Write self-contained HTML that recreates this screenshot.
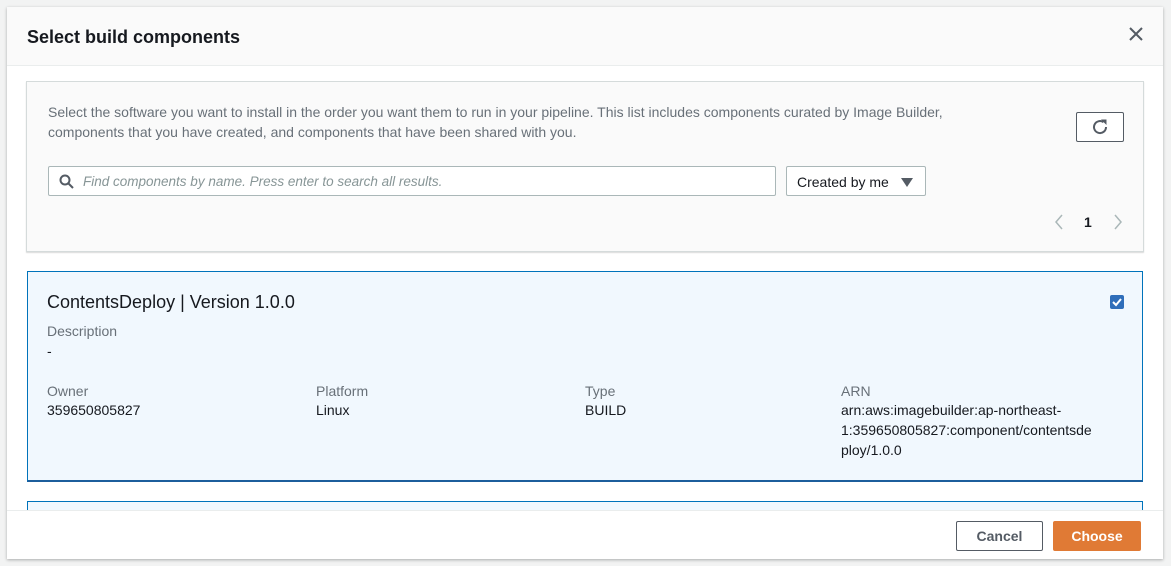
<!DOCTYPE html>
<html><head><style>
*{box-sizing:border-box;margin:0;padding:0}
body{width:1171px;height:566px;background:#f2f3f3;font-family:"Liberation Sans",sans-serif;position:relative;overflow:hidden;color:#16191f}
.modal{position:absolute;left:7px;top:7px;width:1156px;height:552px;background:#fff;box-shadow:0 1px 3px rgba(0,0,0,.3);overflow:hidden}
.hdr{position:absolute;left:0;top:0;width:100%;height:59px;background:#fafafa;border-bottom:1px solid #eaeded}
.hdr h2{position:absolute;left:20px;top:20px;font-size:18px;font-weight:bold}
.x{position:absolute;right:20px;top:20px}
.panel{position:absolute;left:19px;top:74px;width:1118px;height:171px;background:#fafafa;border:1px solid #d5dbdb;box-shadow:0 1px 1px rgba(0,0,0,.15)}
.desc{position:absolute;left:21px;top:20px;font-size:14px;line-height:20px;color:#687078;width:960px}
.refresh{position:absolute;left:1049px;top:30px;width:48px;height:30px;border:1px solid #545b64;background:#fff;border-radius:2px}
.search{position:absolute;left:21px;top:84px;width:728px;height:30px;border:1px solid #aab7b8;background:#fff;border-radius:2px}
.search span{position:absolute;left:34px;top:7px;font-size:13.5px;font-style:italic;color:#879596}
.sel{position:absolute;left:759px;top:84px;width:140px;height:30px;border:1px solid #aab7b8;background:#fff;border-radius:2px;font-size:14px;padding:7px 10px}
.sel i{position:absolute;right:12px;top:11px;width:0;height:0;border-left:6px solid transparent;border-right:6px solid transparent;border-top:9px solid #545b64}
.pg{position:absolute;font-size:14px}
.card{position:absolute;left:20px;width:1116px;background:#f1f8fe;border:1px solid #0073bb;border-bottom:2px solid #1c5e9c}
.card h3{position:absolute;left:19px;top:20px;font-size:18px;font-weight:normal}
.lbl{position:absolute;font-size:14px;color:#687078}
.val{position:absolute;font-size:14px;color:#16191f;line-height:20px}
.cb{position:absolute;right:18px;top:23px;width:14px;height:14px;background:#2f6eba;border-radius:2px}
.ftr{position:absolute;left:0;top:503px;width:100%;height:49px;background:#fff;border-top:1px solid #eaeded}
.btn{position:absolute;top:10px;height:30px;font-size:14px;font-weight:bold;text-align:center;line-height:28px;border-radius:2px}
</style></head><body>
<div class="modal">
<div class="hdr"><h2>Select build components</h2>
<svg class="x" width="14" height="14" viewBox="0 0 14 14"><path d="M1 1L13 13M13 1L1 13" stroke="#545b64" stroke-width="2"/></svg></div>
<div class="panel">
<div class="desc">Select the software you want to install in the order you want them to run in your pipeline. This list includes components curated by Image Builder, components that you have created, and components that have been shared with you.</div>
<div class="refresh"><svg style="position:absolute;left:14px;top:5px" width="18" height="18" viewBox="0 0 18 18"><path d="M15 9A6 6 0 1 1 12.5 4.2" fill="none" stroke="#545b64" stroke-width="2"/><path d="M10 1.5h5.5v5.5z" fill="#545b64"/></svg></div>
<div class="search"><svg style="position:absolute;left:10px;top:7px" width="15" height="15" viewBox="0 0 15 15"><circle cx="6" cy="6" r="4.5" fill="none" stroke="#545b64" stroke-width="2"/><path d="M9.5 9.5L14 14" stroke="#545b64" stroke-width="2"/></svg><span>Find components by name. Press enter to search all results.</span></div>
<div class="sel">Created by me<i></i></div>
<svg style="position:absolute;left:1027px;top:132px" width="10" height="16" viewBox="0 0 10 16"><path d="M8 1L2 8l6 7" fill="none" stroke="#aab7b8" stroke-width="1.5"/></svg>
<div class="pg" style="left:1057px;top:132px;font-weight:bold">1</div>
<svg style="position:absolute;left:1086px;top:132px" width="10" height="16" viewBox="0 0 10 16"><path d="M2 1l6 7-6 7" fill="none" stroke="#aab7b8" stroke-width="1.5"/></svg>
</div>
<div class="card" style="top:264px;height:211px">
<h3>ContentsDeploy | Version 1.0.0</h3>
<div class="cb"><svg width="14" height="14" viewBox="0 0 14 14"><path d="M3 7l3 3 5-6" fill="none" stroke="#fff" stroke-width="2"/></svg></div>
<div class="lbl" style="left:19px;top:51px">Description</div>
<div class="val" style="left:19px;top:69px">-</div>
<div class="lbl" style="left:19px;top:111px">Owner</div>
<div class="val" style="left:19px;top:128px">359650805827</div>
<div class="lbl" style="left:288px;top:111px">Platform</div>
<div class="val" style="left:288px;top:128px">Linux</div>
<div class="lbl" style="left:557px;top:111px">Type</div>
<div class="val" style="left:557px;top:128px">BUILD</div>
<div class="lbl" style="left:813px;top:111px">ARN</div>
<div class="val" style="left:813px;top:128px;width:240px">arn:aws:imagebuilder:ap-northeast-1:359650805827:component/contentsde ploy/1.0.0</div>
</div>
<div class="card" style="top:494px;height:60px"></div>
<div class="ftr">
<div class="btn" style="left:949px;width:87px;border:1px solid #545b64;color:#545b64;background:#fff">Cancel</div>
<div class="btn" style="left:1046px;width:88px;background:#e07a35;color:#fff;border:1px solid #e07a35">Choose</div>
</div>
</div>
</body></html>
